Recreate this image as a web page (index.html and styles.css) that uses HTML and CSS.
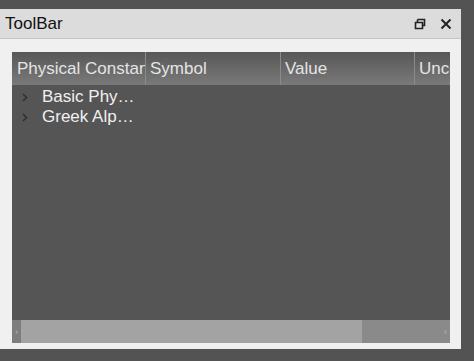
FILE: index.html
```html
<!DOCTYPE html>
<html>
<head>
<meta charset="utf-8">
<link rel="stylesheet" href="styles.css">
</head>
<body>
<div class="dock">
  <div class="title">
    <span class="title-text">ToolBar</span>
    <div class="title-btns">
      <svg class="ico" width="12" height="12" viewBox="0 0 12 12"><path d="M3.5 1.5h7v6h-2M1.5 4.5h7v6h-7z M3.5 1.5v3" fill="none" stroke="#222" stroke-width="1.6"/></svg>
      <svg class="ico" width="12" height="12" viewBox="0 0 12 12"><path d="M1.5 1.5l9 9M10.5 1.5l-9 9" stroke="#222" stroke-width="2"/></svg>
    </div>
  </div>
  <div class="content">
    <div class="tree">
      <div class="header">
        <div class="col c1">Physical Constant</div>
        <div class="col c2">Symbol</div>
        <div class="col c3">Value</div>
        <div class="col c4">Uncertainty</div>
      </div>
      <div class="rows">
        <div class="row"><span class="arrow"><svg width="6" height="9" viewBox="0 0 6 9"><path d="M1 1l3.5 3.5L1 8" fill="none" stroke="#303030" stroke-width="1.5"/></svg></span><span class="label">Basic Phy…</span></div>
        <div class="row"><span class="arrow"><svg width="6" height="9" viewBox="0 0 6 9"><path d="M1 1l3.5 3.5L1 8" fill="none" stroke="#303030" stroke-width="1.5"/></svg></span><span class="label">Greek Alp…</span></div>
      </div>
      <div class="hscroll">
        <div class="sbtn">›</div>
        <div class="handle"></div>
        <div class="track"></div>
        <div class="sbtn right">‹</div>
      </div>
    </div>
  </div>
</div>
</body>
</html>
```

FILE: styles.css
```css
html, body {
  margin: 0;
  padding: 0;
  background: #535353;
  font-family: "Liberation Sans", Arial, sans-serif;
}
.dock {
  margin-top: 9px;
  width: 461px;
  height: 340px;
  background: #f0f0f0;
  display: flex;
  flex-direction: column;
  box-sizing: border-box;
}
.title {
  height: 30px;
  background: #dcdcdc;
  border-bottom: 1px solid #c6c6c6;
  display: flex;
  align-items: center;
  justify-content: space-between;
  padding: 0 9px 0 5px;
  box-sizing: border-box;
  flex: none;
}
.title-text {
  font-size: 17px;
  color: #111;
}
.title-btns {
  display: flex;
  gap: 14px;
  align-items: center;
}
.ico { display: block; }
.content {
  flex: 1;
  padding: 13px 11px 6px 12px;
  display: flex;
  min-height: 0;
}
.tree {
  flex: 1;
  background: #555555;
  display: flex;
  flex-direction: column;
  overflow: hidden;
}
.header {
  height: 33px;
  display: flex;
  flex: none;
  background: linear-gradient(#575757, #7a7a7a);
}
.col {
  box-sizing: border-box;
  height: 100%;
  display: flex;
  align-items: center;
  padding-left: 4px;
  color: #e4e4e4;
  font-size: 17px;
  white-space: nowrap;
  overflow: hidden;
  border-right: 1px solid #8a8a8a;
  flex: none;
}
.c1 { width: 134px; padding-left: 5px; }
.c2 { width: 135px; }
.c3 { width: 134px; }
.c4 { flex: 1; border-right: none; }
.rows {
  flex: 1;
  padding-top: 2px;
}
.row {
  height: 20px;
  display: flex;
  align-items: center;
  color: #f0f0f0;
  font-size: 17px;
}
.arrow {
  width: 30px;
  padding-left: 10px;
  box-sizing: border-box;
  display: flex;
  align-items: center;
}
.arrow svg { display: block; }
.hscroll {
  height: 23px;
  display: flex;
  flex: none;
  background: #8a8a8a;
}
.sbtn {
  width: 9px;
  background: #7d7d7d;
  color: #bbb;
  font-size: 9px;
  display: flex;
  align-items: center;
  justify-content: center;
}
.sbtn.right { background: #8a8a8a; }
.handle {
  width: 341px;
  background: #a3a3a3;
}
.track { flex: 1; }
```
